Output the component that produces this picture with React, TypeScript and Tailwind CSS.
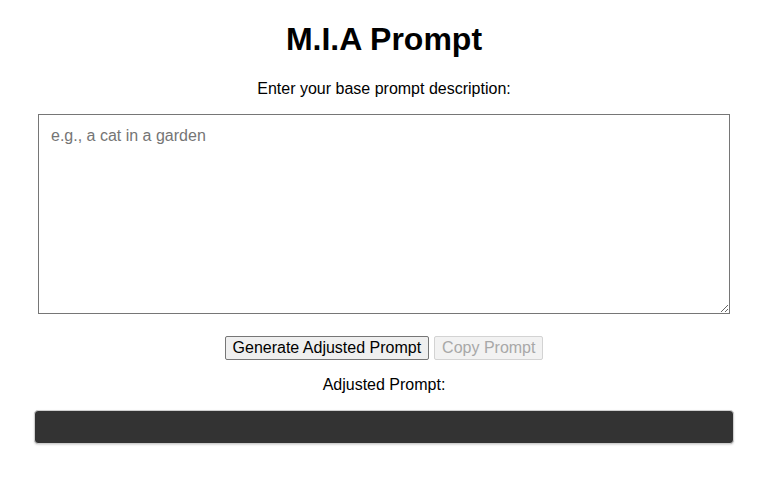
import { useState } from "react";

export default function App() {
  const [text, setText] = useState("");

  return (
    <div className="min-h-[480px] w-full bg-white font-['Liberation_Sans',Arial,sans-serif] text-black">
      <div className="flex flex-col items-center">
        <h1 className="mt-[21px] h-[37px] text-[32px] font-bold leading-[37px]">
          M.I.A Prompt
        </h1>
        <p className="mt-[22px] h-[18px] text-base leading-[18px]">
          Enter your base prompt description:
        </p>
        <textarea
          value={text}
          onChange={(e) => setText(e.target.value)}
          placeholder="e.g., a cat in a garden"
          className="mt-[16px] h-[200px] w-[692px] border border-[#767676] px-3 py-3 text-base leading-[18px] placeholder:text-[#757575] outline-none"
        />
        <div className="mt-[22px] flex gap-[5px]">
          <button className="h-6 rounded-[2px] border border-[#767676] bg-[#efefef] px-[7px] text-base leading-[20px]">
            Generate Adjusted Prompt
          </button>
          <button
            disabled
            className="h-6 rounded-[2px] border border-[#d3d3d3] bg-[#f2f2f2] px-[7px] text-base leading-[20px] text-[#a8a8a8]"
          >
            Copy Prompt
          </button>
        </div>
        <p className="mt-[16px] h-[18px] text-base leading-[18px]">Adjusted Prompt:</p>
        <div className="mt-[16px] h-[34px] w-[700px] rounded-[4px] border border-[#cfcfcf] bg-[#333333] shadow-[0_1px_2px_rgba(0,0,0,0.15)]" />
      </div>
    </div>
  );
}
